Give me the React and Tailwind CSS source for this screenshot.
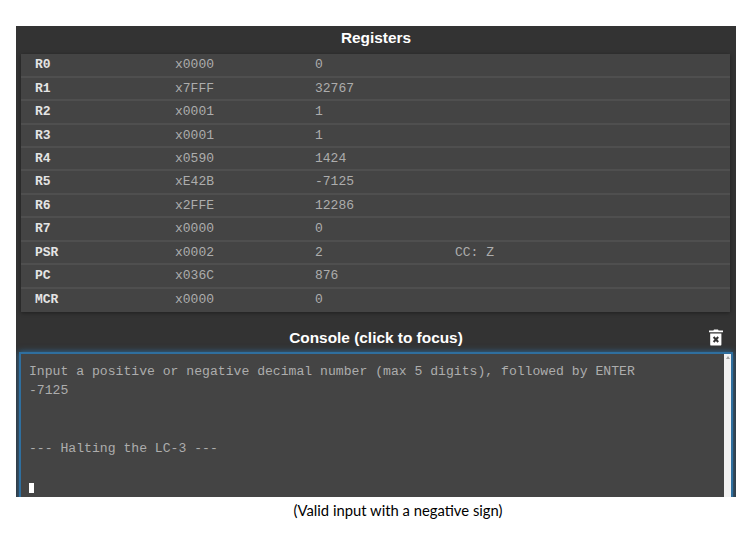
const rows = [
  ["R0", "x0000", "0", ""],
  ["R1", "x7FFF", "32767", ""],
  ["R2", "x0001", "1", ""],
  ["R3", "x0001", "1", ""],
  ["R4", "x0590", "1424", ""],
  ["R5", "xE42B", "-7125", ""],
  ["R6", "x2FFE", "12286", ""],
  ["R7", "x0000", "0", ""],
  ["PSR", "x0002", "2", "CC: Z"],
  ["PC", "x036C", "876", ""],
  ["MCR", "x0000", "0", ""],
];

function TrashIcon() {
  return (
    <svg width="14" height="17" viewBox="0 0 14 17" className="block">
      <path d="M0 1.6h4.4L5 .4h4l.6 1.2H14v1.7H0z" fill="#fff" />
      <path d="M1.2 4.4h11.2v11a1.2 1.2 0 0 1-1.2 1.2H2.4a1.2 1.2 0 0 1-1.2-1.2z" fill="#fff" />
      <path d="M4.6 8l4.6 5M9.2 8l-4.6 5" stroke="#333" strokeWidth="2" />
    </svg>
  );
}

function App() {
  return (
    <div className="w-[748px] h-[537px] bg-white overflow-hidden pt-[26px] px-4">
      <div className="w-[720px] h-[471px] bg-[#333333] overflow-hidden">
        <h2 className="h-[28.3px] leading-[24px] text-center text-white font-bold text-[15.4px] font-['Liberation_Sans',sans-serif]">Registers</h2>
        <div className="mx-[5px] w-[709px] bg-[#444444] shadow-[0_1px_4px_rgba(0,0,0,0.4)] font-['Liberation_Mono',monospace] text-[13px] text-[#adadad]">
          {rows.map((row, i) => (
            <div key={row[0]} className={`flex items-center h-[23.45px] border-b-2 ${i < rows.length - 1 ? "border-[#4f4f4f]" : "border-transparent"}`}>
              <div className="w-[154px] pl-[14px] font-bold text-[#e4e4e4]">{row[0]}</div>
              <div className="w-[140px]">{row[1]}</div>
              <div className="w-[140px]">{row[2]}</div>
              <div>{row[3]}</div>
            </div>
          ))}
        </div>
        <div className="relative h-[39.7px] pt-[11px] flex items-center justify-center text-white font-bold text-[15.4px] font-['Liberation_Sans',sans-serif]">
          Console (click to focus)
          <div className="absolute left-[693px] top-[17px]"><TrashIcon /></div>
        </div>
        <div className="ml-[3px] w-[714px] h-[200px] border-[2px] border-b-0 border-[#2f6f9f] bg-[#444444] shadow-[0_0_6px_#2f6f9f] flex font-['Liberation_Mono',monospace] text-[13.12px] leading-[19.4px] text-[#adadad]">
          <div className="flex-1 pl-2 pt-[8px] whitespace-pre">
            <div>Input a positive or negative decimal number (max 5 digits), followed by ENTER</div>
            <div>-7125</div>
            <div>&nbsp;</div>
            <div>&nbsp;</div>
            <div>--- Halting the LC-3 ---</div>
            <div>&nbsp;</div>
            <div className="flex items-center h-[19.5px]"><span className="w-[5px] h-[10px] bg-white" /></div>
          </div>
          <div className="w-[7px] bg-[#f1f1f1] flex justify-center pt-[2px]">
            <span className="w-0 h-0 border-x-[2px] border-b-[3px] border-x-transparent border-b-[#a0a0a0]" />
          </div>
        </div>
      </div>
      <p className="mt-[2px] pl-[48px] text-center text-[14.8px] text-black font-['Lato',sans-serif]">(Valid input with a negative sign)</p>
    </div>
  );
}

export default App;
